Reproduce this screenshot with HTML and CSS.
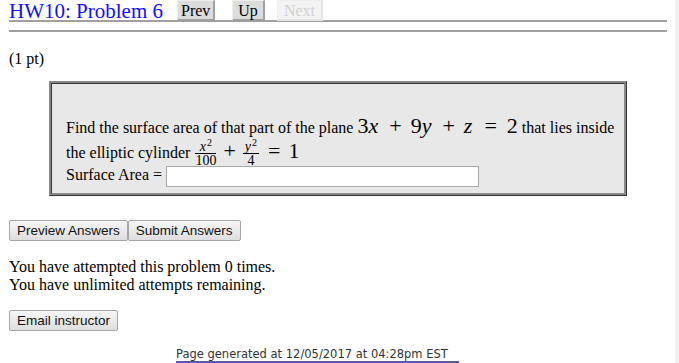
FILE: index.html
```html
<!DOCTYPE html>
<html lang="en">
<head>
  <meta charset="UTF-8">
  <title>HW10: Problem 6</title>
  <link rel="stylesheet" href="styles.css">
</head>
<body>

  <div class="page">
    <div class="main">
      <!-- header -->
      <div class="header">
        <h1 class="title">HW10: Problem 6</h1>
        <div class="nav">
          <span class="navbtn prev">Prev</span>
          <span class="navbtn up">Up</span>
          <span class="navbtn disabled">Next</span>
        </div>
      </div>
      <div class="rule"></div>

      <p class="pts">(1 pt)</p>

      <!-- problem -->
      <div class="problem">
        <p class="line">
          Find the surface area of that part of the plane
          <span class="math"><span class="n">3</span><i>x</i><span class="op">+</span><span class="n">9</span><i>y</i><span class="op">+</span><i>z</i><span class="rel">=</span><span class="n">2</span></span>
          that lies inside
        </p>
        <p class="line second">
          the elliptic cylinder
          <span class="math"><span class="frac"><span class="num"><i>x</i><sup>2</sup></span><span class="den">100</span></span><span class="op">+</span><span class="frac"><span class="num"><i>y</i><sup>2</sup></span><span class="den">4</span></span><span class="rel">=</span><span class="n">1</span></span>
        </p>
        <p class="line answer">
          Surface Area = <input class="ans" type="text">
        </p>
      </div>

      <div class="actions">
        <button class="btn">Preview Answers</button><button class="btn">Submit Answers</button>
      </div>

      <p class="attempts">
        You have attempted this problem 0 times.<br>
        You have unlimited attempts remaining.
      </p>

      <button class="btn">Email instructor</button>

      <div class="footer">
        <span class="stamp">Page generated at 12/05/2017 at 04:28pm EST</span>
      </div>
    </div>
    <div class="track"></div>
  </div>

</body>
</html>
```

FILE: styles.css
```css
body{
  margin: 0;
  font-family: "Liberation Serif", "Times New Roman", serif;
  font-size: 16px;
  color: #000;
  background: #fff;
  overflow: hidden;
}

.page{
  display: flex;
  height: 363px;
}

.main{
  width: 658px;
  padding: 0 8px 0 9px;
}

.track{
  width: 4px;
  margin-left: auto;
  background: #f0f0f0;
}

/* 标题栏 */
.header{
  display: flex;
  align-items: flex-end;
  height: 20px;
  border-bottom: 2px solid #a0a0a0;
}

.title{
  margin: 0;
  font-size: 21px;
  font-weight: normal;
  line-height: 20px;
  color: #1010ff;
  position: relative;
  top: 1px;
}

.nav{
  display: flex;
  margin-left: 14px;
}

.navbtn{
  display: inline-block;
  height: 21px;
  line-height: 19px;
  padding: 0 3px;
  margin-right: 17px;
  font-size: 16px;
  background: #dcdcdc;
  border-top: 1px solid #eeeeee;
  border-left: 1px solid #eeeeee;
  border-right: 2px solid #a0a0a0;
  border-bottom: 2px solid #a0a0a0;
  box-sizing: border-box;
  position: relative;
  top: 1px;
}

.navbtn.up{
  margin-right: 12px;
  padding: 0 5px;
}

.navbtn.disabled{
  color: #d0d0d0;
  background: #f3f3f3;
  border-right-color: #e4e4e4;
  border-bottom-color: #e4e4e4;
  padding: 0 6px;
}

.rule{
  margin-top: 8px;
  border-top: 2px solid #a0a0a0;
}

.pts{
  margin: 18px 0 0;
  line-height: 18px;
}

/* 题目区域 */
.problem{
  margin: 13px 0 0 40px;
  width: 552px;
  padding: 30px 6px 6px 14px;
  background: #e8e8e8;
  border: 3px ridge #888;
}

.line{
  margin: 0;
  line-height: 24px;
  height: 24px;
  white-space: nowrap;
}

.line.second{
  height: 25px;
  line-height: 25px;
}

.math{
  font-size: 22px;
}

.math i{
  font-family: "Liberation Serif", serif;
  font-style: italic;
  padding-right: 2px;
}

.op{
  margin: 0 9px;
}

.rel{
  margin: 0 10px;
}

.second .op{
  margin: 0 6px;
}

.second .rel{
  margin: 0 8px;
}

.frac{
  display: inline-flex;
  flex-direction: column;
  vertical-align: 7px;
  font-size: 14px;
  text-align: center;
  line-height: 11px;
  margin: 0 1px;
}

.frac i{
  padding-right: 1px;
}

.frac .num{
  border-bottom: 1px solid #000;
  padding: 0 2px 1px;
}

.frac .den{
  padding-top: 1px;
}

.frac sup{
  font-size: 10px;
  line-height: 0;
  vertical-align: 5px;
}

.ans{
  width: 307px;
  height: 17px;
  padding: 1px 2px;
  border: 1px solid #a9a9a9;
  background: #fff;
  vertical-align: middle;
}

/* 按钮 */
.actions{
  margin-top: 24px;
}

.btn{
  font-family: "Liberation Sans", Arial, sans-serif;
  font-size: 13.5px;
  color: #111;
  height: 21px;
  padding: 0 7px;
  margin: 0;
  border: 1px solid #a6a6a6;
  border-radius: 2px;
  background: linear-gradient(#f6f6f6, #dedede);
}

.attempts{
  margin: 17px 0 16px;
  line-height: 18px;
}

.footer{
  display: flex;
  margin-top: 16px;
  padding-left: 167px;
}

.stamp{
  width: 283px;
  font-family: "DejaVu Sans", Verdana, sans-serif;
  font-size: 11.5px;
  color: #333;
  border-bottom: 2px solid #5a5aa0;
  line-height: 14px;
}
```
